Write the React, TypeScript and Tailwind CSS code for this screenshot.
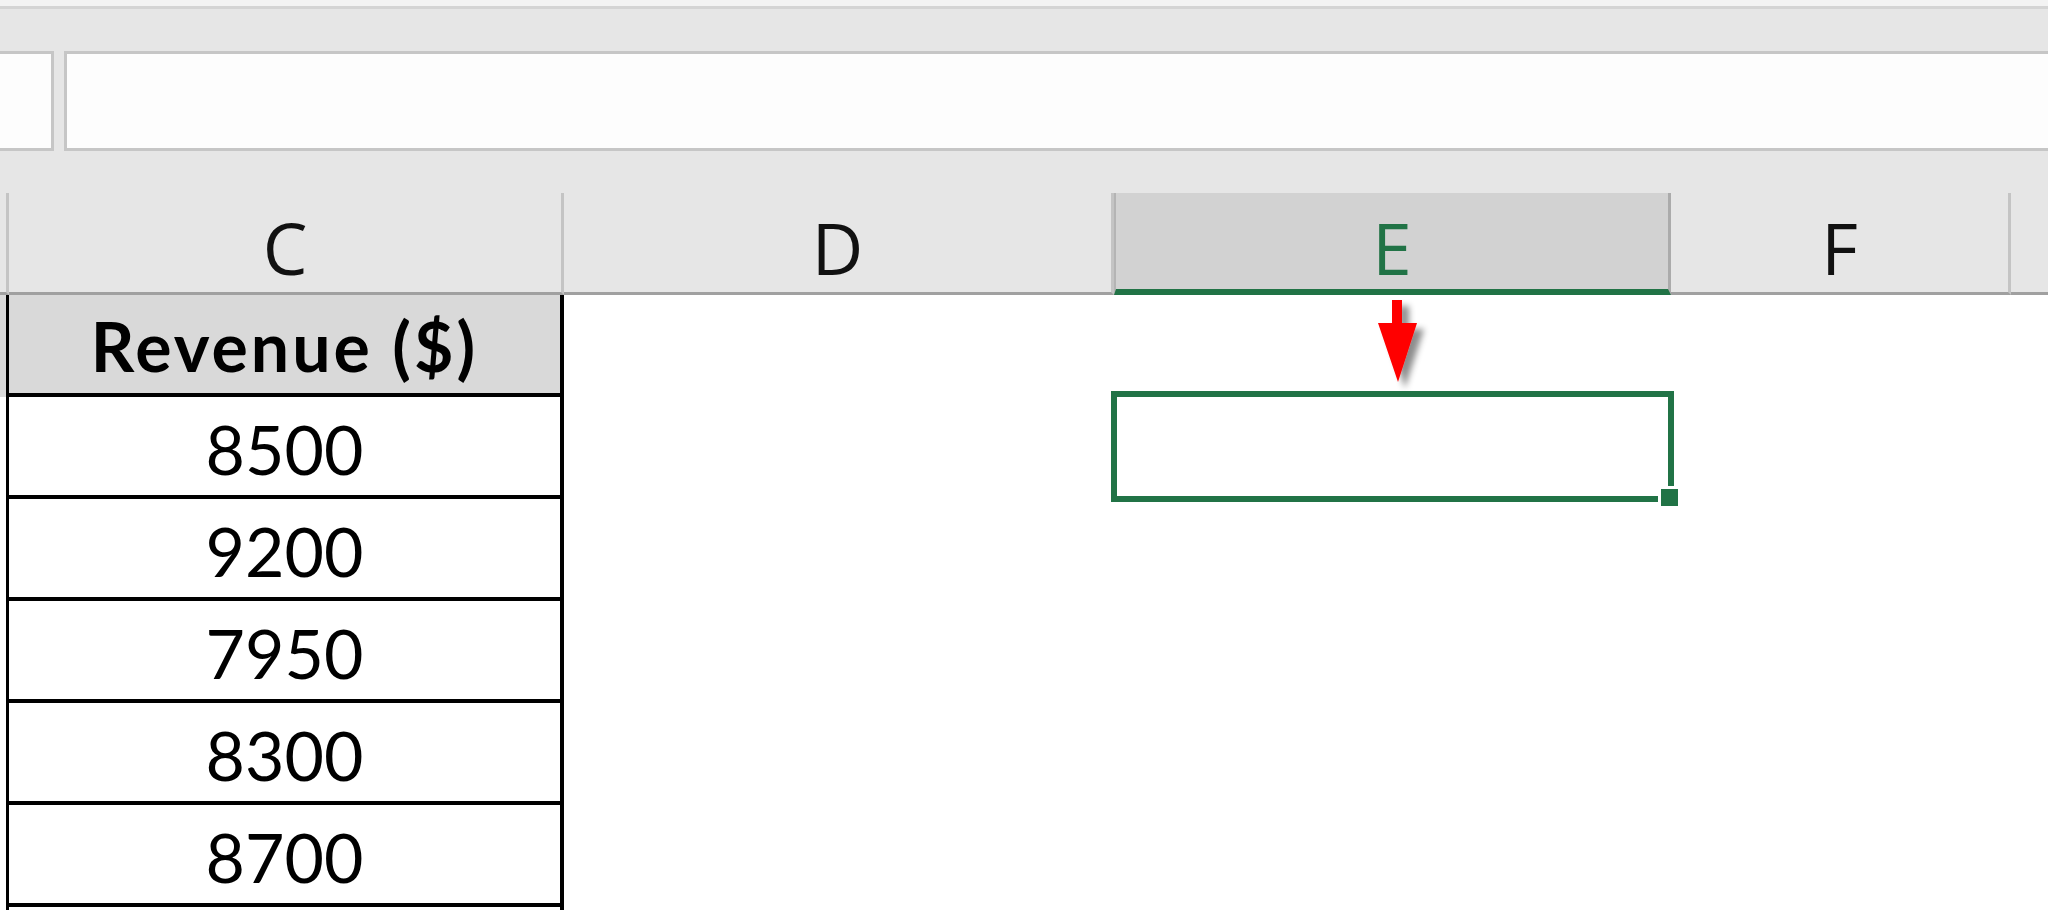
const COLS = [
  { id: 'D', w: 'w-[550px]', selected: false },
  { id: 'E', w: 'w-[557px]', selected: true },
  { id: 'F', w: 'w-[340px]', selected: false },
];

const REVENUE = ['8500', '9200', '7950', '8300', '8700', ''];

const headFont = { fontFamily: '"Open Sans", "Noto Sans", sans-serif' };
const cellFont = { fontFamily: 'Lato, "Liberation Sans", sans-serif' };

function ColumnHeader({ id, w, selected }: { id: string; w: string; selected: boolean }) {
  if (selected) {
    return (
      <div className={`${w} h-full flex items-end justify-center bg-[#d2d2d2] border-l-[2px] border-r-[3px] border-b-[6px] border-l-[#b4b4b4] border-r-[#ababab] border-b-[#217346] pb-[6px]`}>
        <span className="text-[71px] leading-none font-normal text-[#217346]" style={headFont}>{id}</span>
      </div>
    );
  }
  return (
    <div className={`${w} h-full flex items-end justify-center border-r-[3px] border-b-[3px] border-r-[#c4c4c4] border-b-[#a0a0a0] pb-[9px]`}>
      <span className="text-[71px] leading-none font-normal text-[#111]" style={headFont}>{id}</span>
    </div>
  );
}

function RedArrow() {
  return (
    <svg width="70" height="100" viewBox="0 0 70 100" className="absolute left-[1370px] top-[1px]">
      <defs>
        <filter id="arrowShadow" x="-30%" y="-30%" width="180%" height="160%">
          <feDropShadow dx="7" dy="6" stdDeviation="3" floodColor="#000" floodOpacity="0.45" />
        </filter>
      </defs>
      <path d="M22 4 H32 V27 H47 L28 86 L8 27 H22 Z" fill="#ff0000" filter="url(#arrowShadow)" />
    </svg>
  );
}

export default function App() {
  return (
    <div className="w-[2048px] h-[910px] overflow-hidden bg-white">
      {/* ribbon edge */}
      <div className="h-[6px] bg-[#f3f3f3]" />
      <div className="h-[3px] bg-[#d4d4d4]" />

      {/* name box + formula bar */}
      <div className="h-[184px] bg-[#e6e6e6] pt-[42px]">
        <div className="h-[100px] flex gap-[10px]">
          <div className="w-[54px] bg-[#fdfdfd] border-[3px] border-l-0 border-[#c6c6c6]" />
          <div className="flex-1 bg-[#fdfdfd] border-[3px] border-r-0 border-[#c6c6c6]" />
        </div>
      </div>

      {/* column headers */}
      <div className="h-[102px] flex bg-[#e6e6e6]">
        <div className="w-[9px] h-full border-r-[3px] border-b-[3px] border-r-[#c4c4c4] border-b-[#a0a0a0]" />
        <ColumnHeader id="C" w="w-[555px]" selected={false} />
        {COLS.map((c) => (
          <ColumnHeader key={c.id} {...c} />
        ))}
        <div className="flex-1 h-full border-b-[3px] border-b-[#a0a0a0]" />
      </div>

      {/* sheet body */}
      <div className="relative h-[615px] overflow-hidden">
        <div className="flex h-[102px]">
          <div className="w-[6px] bg-[#d9d9d9]" />
          <div className="w-[558px] flex items-end justify-center bg-[#d9d9d9] border-l-[3px] border-r-[4px] border-b-[4px] border-black pb-[13px]">
            <span className="text-[68px] leading-none font-bold tracking-[3px] text-black" style={cellFont}>Revenue ($)</span>
          </div>
        </div>
        {REVENUE.map((v, i) => (
          <div key={i} className="flex h-[102px]">
            <div className="w-[6px]" />
            <div className="w-[558px] flex items-end justify-center border-l-[3px] border-r-[4px] border-b-[4px] border-black pb-[12px]">
              <span className="text-[68px] leading-none text-black" style={cellFont}>{v}</span>
            </div>
          </div>
        ))}

        <RedArrow />

        {/* active cell E3 */}
        <div className="absolute left-[1111px] top-[96px] w-[563px] h-[111px] border-[6px] border-[#217346]">
          <div className="absolute -right-[13px] -bottom-[13px] w-[23px] h-[23px] border-[3px] border-white bg-[#217346]" />
        </div>
      </div>
    </div>
  );
}
